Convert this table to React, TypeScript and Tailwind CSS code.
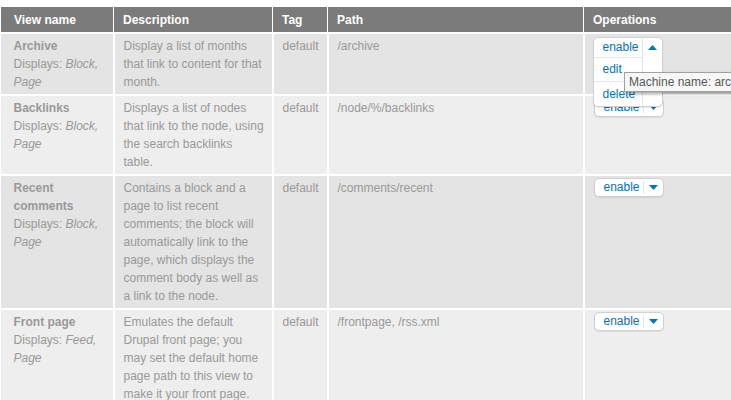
import React from 'react';

type View = {
  name: string;
  displays: string;
  description: string;
  tag: string;
  path: string;
  open?: boolean;
};

const views: View[] = [
  {
    name: 'Archive',
    displays: 'Block, Page',
    description: 'Display a list of months that link to content for that month.',
    tag: 'default',
    path: '/archive',
    open: true,
  },
  {
    name: 'Backlinks',
    displays: 'Block, Page',
    description: 'Displays a list of nodes that link to the node, using the search backlinks table.',
    tag: 'default',
    path: '/node/%/backlinks',
  },
  {
    name: 'Recent comments',
    displays: 'Block, Page',
    description:
      'Contains a block and a page to list recent comments; the block will automatically link to the page, which displays the comment body as well as a link to the node.',
    tag: 'default',
    path: '/comments/recent',
  },
  {
    name: 'Front page',
    displays: 'Feed, Page',
    description:
      'Emulates the default Drupal front page; you may set the default home page path to this view to make it your front page.',
    tag: 'default',
    path: '/frontpage, /rss.xml',
  },
];

function Arrow({ up }: { up?: boolean }) {
  return (
    <svg width="9" height="5" viewBox="0 0 9 5" className="block">
      {up ? <path d="M0 5 L4.5 0 L9 5 Z" fill="#0074bd" /> : <path d="M0 0 L9 0 L4.5 5 Z" fill="#0074bd" />}
    </svg>
  );
}

function DropButton({ open }: { open?: boolean }) {
  if (open) {
    return (
      <div className="absolute left-[8px] top-[3px] z-10 flex w-[70px] rounded-[5px] border border-[#d0d0d0] bg-white shadow-[0_1px_1px_rgba(0,0,0,0.08)]">
        <div className="flex flex-1 flex-col">
          <a className="h-[20px] border-b border-[#e6e6e6] pl-[9px] leading-[18px] text-[#0074bd]">enable</a>
          <a className="h-[24px] border-b border-[#e6e6e6] pl-[9px] leading-[22px] text-[#0074bd]">edit</a>
          <a className="h-[24px] pl-[9px] pt-[1px] leading-[22px] text-[#0074bd]">delete</a>
        </div>
        <div className="flex w-[20px] justify-center border-l border-[#e6e6e6] pt-[7px]">
          <Arrow up />
        </div>
      </div>
    );
  }
  return (
    <div className="flex h-[19px] w-[70px] rounded-[5px] border border-[#d0d0d0] bg-white shadow-[0_1px_1px_rgba(0,0,0,0.08)]">
      <a className="flex-1 pl-[9px] leading-[17px] text-[#0074bd]">enable</a>
      <div className="my-[2px] flex w-[20px] items-center justify-center border-l border-[#e6e6e6]">
        <Arrow />
      </div>
    </div>
  );
}

export default function App() {
  return (
    <div className="relative h-[400px] w-[731px] overflow-hidden bg-white pt-[7px] font-['Liberation_Sans',Arial,sans-serif] text-[12px] leading-[18px] text-[#999999]">
      <table className="w-[760px] table-fixed border-collapse">
        <colgroup>
          <col className="w-[113px]" />
          <col className="w-[159px]" />
          <col className="w-[55px]" />
          <col className="w-[256px]" />
          <col className="w-[177px]" />
        </colgroup>
        <thead>
          <tr className="h-[26px] bg-[#7b7b7b] text-left text-white">
            {['View name', 'Description', 'Tag', 'Path', 'Operations'].map((h, i) => (
              <th
                key={h}
                className={`border-x border-b-2 border-white pr-[4px] align-middle font-bold ${i === 0 ? 'pl-[13px]' : 'pl-[9px]'}`}
              >
                {h}
              </th>
            ))}
          </tr>
        </thead>
        <tbody>
          {views.map((v, i) => (
            <tr key={v.name} className={i % 2 === 0 ? 'bg-[#e4e4e4]' : 'bg-[#eeeeee]'}>
              <td className="border-2 border-l-0 border-white pb-[3px] pl-[13px] pr-[2px] pt-[3px] align-top">
                <div className="font-bold">{v.name}</div>
                <div>
                  Displays: <em>{v.displays}</em>
                </div>
              </td>
              <td className="border-2 border-white pb-[3px] pl-[9px] pr-[2px] pt-[3px] align-top">
                <div className="w-[140.7px]">{v.description}</div>
              </td>
              <td className="border-2 border-white pb-[3px] pl-[9px] pr-[4px] pt-[3px] align-top">{v.tag}</td>
              <td className="border-2 border-white pb-[3px] pl-[9px] pr-[4px] pt-[3px] align-top">{v.path}</td>
              <td className="relative border-2 border-white pb-[3px] pl-[9px] pr-[4px] pt-[2px] align-top">
                {v.open ? (
                  <>
                    <div className="h-[19px]" />
                    <DropButton open />
                  </>
                ) : (
                  <DropButton />
                )}
              </td>
            </tr>
          ))}
        </tbody>
      </table>
      <div className="absolute left-[624px] top-[72px] z-20 whitespace-nowrap border border-[#a0a0a0] bg-[#f7f7f7] px-[4px] text-[12px] leading-[18px] text-[#575757] shadow-[2px_2px_3px_rgba(0,0,0,0.35)]">
        Machine name: archive
      </div>
    </div>
  );
}
